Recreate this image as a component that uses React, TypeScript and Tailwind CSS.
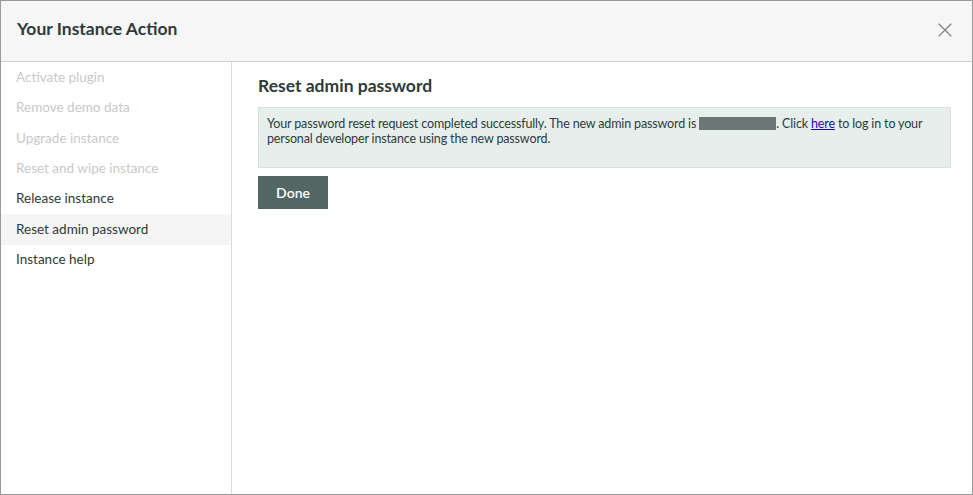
import { X } from 'lucide-react'

const menu = [
  { label: 'Activate plugin', disabled: true },
  { label: 'Remove demo data', disabled: true },
  { label: 'Upgrade instance', disabled: true },
  { label: 'Reset and wipe instance', disabled: true },
  { label: 'Release instance' },
  { label: 'Reset admin password', active: true },
  { label: 'Instance help' },
]

export default function App() {
  return (
    <div className="h-[495px] w-[973px] border border-[#9a9a9a] bg-white flex flex-col overflow-hidden" style={{ fontFamily: 'Lato, "Noto Sans", sans-serif' }}>
      {/* Header */}
      <div className="h-[61px] shrink-0 bg-[#f6f6f6] border-b border-[#cfcfcf] flex items-center justify-between pl-4 pr-[15px] pb-[3px]">
        <h1 className="text-[17.5px] font-bold text-[#2e3b3a]">Your Instance Action</h1>
        <button className="text-[#75807f]">
          <X size={24} strokeWidth={1.1} />
        </button>
      </div>

      <div className="flex flex-1 min-h-0">
        {/* Sidebar */}
        <div className="w-[231px] shrink-0 border-r border-[#dcdcdc] pt-[1px]">
          {menu.map(item => (
            <div
              key={item.label}
              className={`h-[30.3px] flex items-center pl-[15px] pb-[2px] text-[13.5px] ${
                item.disabled ? 'text-[#c9c9c9]' : 'text-[#2e3b3a]'
              } ${item.active ? 'bg-[#f5f5f5]' : ''}`}
            >
              {item.label}
            </div>
          ))}
        </div>

        {/* Content */}
        <div className="flex-1 pl-[26px] pr-[21px] pt-[12px]">
          <h2 className="text-[17.5px] font-bold text-[#2e3b3a] leading-[24px]">Reset admin password</h2>
          <div className="mt-[9px] h-[61px] bg-[#e6efec] border border-[#d6e2de] px-2 pt-[8px] text-[12.5px] tracking-[-0.15px] leading-[15px] text-[#2e3b3a]">
            Your password reset request completed successfully. The new admin password is{' '}
            <span className="inline-block align-[-2px] w-[77px] h-[13px] bg-[#6b7775]" />. Click{' '}
            <a href="#" className="text-[#1a0dab] underline">here</a> to log in to your personal developer instance using the new password.
          </div>
          <button className="mt-[8px] h-[33px] w-[70px] bg-[#546663] text-white text-[14px] font-semibold">Done</button>
        </div>
      </div>
    </div>
  )
}
